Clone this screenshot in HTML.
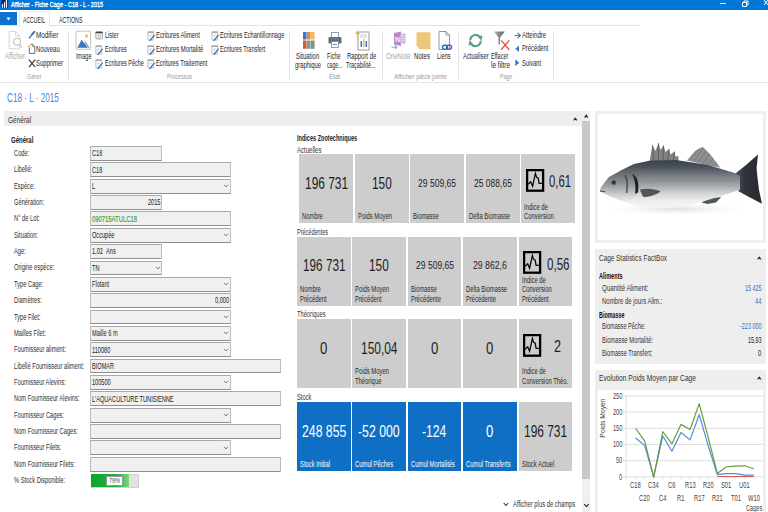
<!DOCTYPE html>
<html><head><meta charset="utf-8"><style>
html,body{margin:0;padding:0;width:768px;height:512px;overflow:hidden;background:#fff}
body{position:relative;font-family:"Liberation Sans",sans-serif}
.r{position:absolute;display:block}
.t{position:absolute;white-space:nowrap;line-height:1;transform-origin:0 0}
</style></head><body>
<div class="r" style="left:0.00px;top:0.00px;width:768.00px;height:10.00px;background:#0077d6"></div>
<svg class="r" style="left:0px;top:0px" width="9" height="9" viewBox="0 0 9 9"><rect x="1.2" y="0" width="6.5" height="8" fill="#0c2a66"/><rect x="1.9" y="4.2" width="1.1" height="3.6" fill="#f4f4f4"/><rect x="3.9" y="2.3" width="1.1" height="5.5" fill="#f4f4f4"/><rect x="5.8" y="0" width="1.2" height="7.8" fill="#f4f4f4"/></svg>
<div class="t" style="left:10.90px;top:0.72px;font-size:7.3px;color:#fff;transform:scaleX(0.7600);-webkit-text-stroke:0.3px #fff">Afficher - Fiche Cage - C18 - L - 2015</div>
<div class="r" style="left:720.00px;top:2.50px;width:5.50px;height:1.00px;background:#fff;opacity:.85"></div>
<svg class="r" style="left:741px;top:0px" width="8" height="7" viewBox="0 0 8 7"><path d="M1.5 2.5h4v4h-4z M3 2.5v-1.5h4v4h-1.5" fill="none" stroke="#fff" stroke-width="1"/></svg>
<svg class="r" style="left:763px;top:0px" width="5" height="7" viewBox="0 0 5 7"><path d="M1 0L5 5M5 0L1 5" stroke="#fff" stroke-width="1"/></svg>
<div class="r" style="left:0.00px;top:10.30px;width:768.00px;height:15.70px;background:#fff"></div>
<div class="r" style="left:0.00px;top:25.00px;width:640.00px;height:1.20px;background:#e3e3e3"></div>
<div class="r" style="left:0.00px;top:11.50px;width:16.70px;height:13.90px;background:#0f72cc"></div>
<svg class="r" style="left:6px;top:17px" width="5" height="4" viewBox="0 0 5 4"><path d="M.5 .4h4L2.5 3.6z" fill="#fff"/></svg>
<div class="r" style="left:18.50px;top:11.30px;width:31.50px;height:14.90px;background:#fff;border:1px solid #e6e6e6;border-bottom:none;box-sizing:border-box"></div>
<div class="t" style="left:23.40px;top:16.00px;font-size:8.5px;color:#222;transform:scaleX(0.6025);">ACCUEIL</div>
<div class="t" style="left:58.60px;top:16.00px;font-size:8.5px;color:#222;transform:scaleX(0.6193);">ACTIONS</div>
<div class="r" style="left:0.00px;top:26.20px;width:768.00px;height:55.10px;background:#fff"></div>
<div class="r" style="left:0.00px;top:81.70px;width:768.00px;height:1.30px;background:#e4e4e4"></div>
<div class="r" style="left:68.40px;top:31.00px;width:0.80px;height:47.50px;background:#e2e2e2"></div>
<div class="r" style="left:289.10px;top:31.00px;width:0.80px;height:47.50px;background:#e2e2e2"></div>
<div class="r" style="left:381.80px;top:31.00px;width:0.80px;height:47.50px;background:#e2e2e2"></div>
<div class="r" style="left:457.50px;top:31.00px;width:0.80px;height:47.50px;background:#e2e2e2"></div>
<div class="r" style="left:552.70px;top:31.00px;width:0.80px;height:47.50px;background:#e2e2e2"></div>
<div class="t" style="left:27.00px;top:72.63px;font-size:8px;color:#9a9a9a;transform:scaleX(0.7139);">Gérer</div>
<div class="t" style="left:167.00px;top:72.63px;font-size:8px;color:#9a9a9a;transform:scaleX(0.6640);">Processus</div>
<div class="t" style="left:329.40px;top:72.63px;font-size:8px;color:#9a9a9a;transform:scaleX(0.8011);">État</div>
<div class="t" style="left:394.00px;top:72.63px;font-size:8px;color:#9a9a9a;transform:scaleX(0.7578);">Afficher pièce jointe</div>
<div class="t" style="left:500.00px;top:72.63px;font-size:8px;color:#9a9a9a;transform:scaleX(0.6422);">Page</div>
<svg class="r" style="left:8px;top:30px" width="16" height="20" viewBox="0 0 16 20"><path d="M1.2 1.4h6.3l4.2 4.4v13h-10.5z M7.5 1.4v4.4h4.2" fill="#fff" stroke="#d6d6d6" stroke-width="1" stroke-linejoin="round"/><circle cx="9.1" cy="11.7" r="3.4" fill="#fff" stroke="#c4c4c4" stroke-width="1.1"/><path d="M11.4 14.3l2.6 3.3" stroke="#c4c4c4" stroke-width="1.3"/></svg>
<div class="t" style="left:4.95px;top:52.40px;font-size:8.5px;color:#a8a8a8;transform:scaleX(0.7012);">Afficher</div>
<svg class="r" style="left:28px;top:31px" width="8" height="9" viewBox="0 0 8 9"><path d="M1.4 6.9L5.4 1.9" stroke="#3672c4" stroke-width="1.5" stroke-linecap="round"/><path d="M4.3 3.2L6.3 .9" stroke="#3672c4" stroke-width="2" stroke-linecap="round"/></svg>
<div class="t" style="left:36.30px;top:30.80px;font-size:8.5px;color:#262626;transform:scaleX(0.7376);">Modifier</div>
<svg class="r" style="left:27px;top:43px" width="9" height="11" viewBox="0 0 9 11"><path d="M2.3 4.5v5.9h5.5V3.6l-2-2.2H3.5" fill="#fff" stroke="#555" stroke-width=".85" stroke-linejoin="round"/><path d="M5.6 1.4v2.3h2.2" fill="none" stroke="#777" stroke-width=".7"/><path d="M2.2 1.7l1.2 1.5l-1.2 1.5l-1.2-1.5z" fill="#f0b050"/></svg>
<div class="t" style="left:36.30px;top:44.60px;font-size:8.5px;color:#262626;transform:scaleX(0.6965);">Nouveau</div>
<svg class="r" style="left:27.5px;top:58.5px" width="8" height="9" viewBox="0 0 8 9"><path d="M.9 .7L7.2 8.2M7.2 .7L.9 8.2" stroke="#3a3a3a" stroke-width="1.15"/></svg>
<div class="t" style="left:36.30px;top:58.80px;font-size:8.5px;color:#262626;transform:scaleX(0.6937);">Supprimer</div>
<svg class="r" style="left:75px;top:30px" width="17" height="20" viewBox="0 0 17 20"><rect x="1.1" y="1.3" width="14.5" height="18" rx=".8" fill="#fff" stroke="#c6c6c6" stroke-width="1.1"/><path d="M2.3 17.8L6.6 9.8L9.4 13.6L10 10.9L14.5 17.8z" fill="#3d77c0"/><path d="M9.4 12.2L13.2 17.8" stroke="#fff" stroke-width=".8"/><ellipse cx="11.5" cy="5.9" rx="1.5" ry="1.9" fill="#efbf62"/></svg>
<div class="t" style="left:75.80px;top:52.40px;font-size:8.5px;color:#262626;transform:scaleX(0.6603);">Image</div>
<svg class="r" style="left:95px;top:31px" width="8.5" height="9" viewBox="0 0 8.5 9"><rect x=".8" y=".9" width="6.6" height="7" rx="1" fill="#f4f4f4" stroke="#9a9a9a" stroke-width=".9"/><rect x=".6" y=".7" width="7" height="1.5" fill="#3e3e3e"/><path d="M3.1 2.2v5.6M5.1 2.2v5.6" stroke="#b0b0b0" stroke-width=".8"/></svg>
<div class="t" style="left:104.60px;top:30.80px;font-size:8.5px;color:#262626;transform:scaleX(0.6495);">Lister</div>
<svg class="r" style="left:95.3px;top:44.5px" width="9" height="10" viewBox="0 0 9 10"><path d="M.8 .7h5.8v8.3h-5.8z" fill="#fafafa" stroke="#b8b8b8" stroke-width=".8"/><path d="M.8 .7h5.8v1.1h-5.8z" fill="#9a9a9a"/><path d="M2 4.2l1 1l1.5-1.8" stroke="#aaa" stroke-width=".6" fill="none"/><path d="M3 9.5L7.3 4.2" stroke="#3672c4" stroke-width="1.25" stroke-linecap="round"/></svg>
<div class="t" style="left:104.60px;top:44.60px;font-size:8.5px;color:#262626;transform:scaleX(0.6500);">Ecritures</div>
<svg class="r" style="left:95.3px;top:59.0px" width="9" height="10" viewBox="0 0 9 10"><path d="M.8 .7h5.8v8.3h-5.8z" fill="#fafafa" stroke="#b8b8b8" stroke-width=".8"/><path d="M.8 .7h5.8v1.1h-5.8z" fill="#9a9a9a"/><path d="M2 4.2l1 1l1.5-1.8" stroke="#aaa" stroke-width=".6" fill="none"/><path d="M3 9.5L7.3 4.2" stroke="#3672c4" stroke-width="1.25" stroke-linecap="round"/></svg>
<div class="t" style="left:104.60px;top:59.30px;font-size:8.5px;color:#262626;transform:scaleX(0.6483);">Ecritures Pêche</div>
<svg class="r" style="left:147.3px;top:31.0px" width="9" height="10" viewBox="0 0 9 10"><path d="M.8 .7h5.8v8.3h-5.8z" fill="#fafafa" stroke="#b8b8b8" stroke-width=".8"/><path d="M.8 .7h5.8v1.1h-5.8z" fill="#9a9a9a"/><path d="M2 4.2l1 1l1.5-1.8" stroke="#aaa" stroke-width=".6" fill="none"/><path d="M3 9.5L7.3 4.2" stroke="#3672c4" stroke-width="1.25" stroke-linecap="round"/></svg>
<div class="t" style="left:155.60px;top:30.80px;font-size:8.5px;color:#262626;transform:scaleX(0.6899);">Ecritures Aliment</div>
<svg class="r" style="left:147.3px;top:44.5px" width="9" height="10" viewBox="0 0 9 10"><path d="M.8 .7h5.8v8.3h-5.8z" fill="#fafafa" stroke="#b8b8b8" stroke-width=".8"/><path d="M.8 .7h5.8v1.1h-5.8z" fill="#9a9a9a"/><path d="M2 4.2l1 1l1.5-1.8" stroke="#aaa" stroke-width=".6" fill="none"/><path d="M3 9.5L7.3 4.2" stroke="#3672c4" stroke-width="1.25" stroke-linecap="round"/></svg>
<div class="t" style="left:155.60px;top:44.60px;font-size:8.5px;color:#262626;transform:scaleX(0.6906);">Ecritures Mortalité</div>
<svg class="r" style="left:147.3px;top:59.0px" width="9" height="10" viewBox="0 0 9 10"><path d="M.8 .7h5.8v8.3h-5.8z" fill="#fafafa" stroke="#b8b8b8" stroke-width=".8"/><path d="M.8 .7h5.8v1.1h-5.8z" fill="#9a9a9a"/><path d="M2 4.2l1 1l1.5-1.8" stroke="#aaa" stroke-width=".6" fill="none"/><path d="M3 9.5L7.3 4.2" stroke="#3672c4" stroke-width="1.25" stroke-linecap="round"/></svg>
<div class="t" style="left:155.60px;top:59.30px;font-size:8.5px;color:#262626;transform:scaleX(0.6758);">Ecritures Traitement</div>
<svg class="r" style="left:211.0px;top:31.0px" width="9" height="10" viewBox="0 0 9 10"><path d="M.8 .7h5.8v8.3h-5.8z" fill="#fafafa" stroke="#b8b8b8" stroke-width=".8"/><path d="M.8 .7h5.8v1.1h-5.8z" fill="#9a9a9a"/><path d="M2 4.2l1 1l1.5-1.8" stroke="#aaa" stroke-width=".6" fill="none"/><path d="M3 9.5L7.3 4.2" stroke="#3672c4" stroke-width="1.25" stroke-linecap="round"/></svg>
<div class="t" style="left:219.70px;top:30.80px;font-size:8.5px;color:#262626;transform:scaleX(0.6671);">Ecritures Echantillonnage</div>
<svg class="r" style="left:211.0px;top:44.5px" width="9" height="10" viewBox="0 0 9 10"><path d="M.8 .7h5.8v8.3h-5.8z" fill="#fafafa" stroke="#b8b8b8" stroke-width=".8"/><path d="M.8 .7h5.8v1.1h-5.8z" fill="#9a9a9a"/><path d="M2 4.2l1 1l1.5-1.8" stroke="#aaa" stroke-width=".6" fill="none"/><path d="M3 9.5L7.3 4.2" stroke="#3672c4" stroke-width="1.25" stroke-linecap="round"/></svg>
<div class="t" style="left:219.70px;top:44.60px;font-size:8.5px;color:#262626;transform:scaleX(0.6524);">Ecritures Transfert</div>
<svg class="r" style="left:302.5px;top:31.5px" width="12" height="17" viewBox="0 0 12 17"><rect x="0" y="0" width="3.6" height="7.5" fill="#3d78c4"/><rect x="4" y="0" width="3.6" height="7.5" fill="#e8883c"/><rect x="8" y="0" width="3.6" height="7.5" fill="#f0b860"/><rect x="0" y="8.5" width="3.6" height="8.3" fill="#d65a3a"/><rect x="4" y="8.5" width="3.6" height="8.3" fill="#6aa88c"/><rect x="8" y="8.5" width="3.6" height="8.3" fill="#8c8c8c"/></svg>
<div class="t" style="left:296.00px;top:52.40px;font-size:8.5px;color:#262626;transform:scaleX(0.7013);">Situation</div>
<div class="t" style="left:294.60px;top:61.10px;font-size:8.5px;color:#262626;transform:scaleX(0.6876);">graphique</div>
<svg class="r" style="left:327.5px;top:32px" width="14" height="16" viewBox="0 0 14 16"><rect x="3.5" y=".5" width="7" height="5" fill="#fff" stroke="#888" stroke-width=".8"/><rect x=".5" y="5" width="13" height="6.5" rx="1" fill="#6b6b6b"/><rect x="3" y="6.3" width="8" height="1" fill="#4a8ad0"/><rect x="3.5" y="9.5" width="7" height="6" fill="#fff" stroke="#888" stroke-width=".8"/><rect x="5" y="12" width="4" height="1" fill="#4a8ad0"/></svg>
<div class="t" style="left:326.75px;top:52.40px;font-size:8.5px;color:#262626;transform:scaleX(0.6591);">Fiche</div>
<div class="t" style="left:326.65px;top:61.10px;font-size:8.5px;color:#262626;transform:scaleX(0.5996);">cage...</div>
<svg class="r" style="left:353.5px;top:29.5px" width="16" height="21" viewBox="0 0 16 21"><rect x="4" y="2" width="11" height="18" fill="#fff" stroke="#9a9a9a" stroke-width="1"/><path d="M6 5h7M6 7h7" stroke="#bbb" stroke-width=".8"/><rect x="6.5" y="11" width="1.6" height="6" fill="#3d78c4"/><rect x="9" y="9" width="1.6" height="8" fill="#f0c060"/><rect x="11.5" y="11" width="1.6" height="6" fill="#3d78c4"/><path d="M4 0L1 4h2.5L2 7.5L6 3H3.5z" fill="#f0a83a"/></svg>
<div class="t" style="left:346.50px;top:52.40px;font-size:8.5px;color:#262626;transform:scaleX(0.6943);">Rapport de</div>
<div class="t" style="left:346.45px;top:61.10px;font-size:8.5px;color:#262626;transform:scaleX(0.6416);">Traçabilité...</div>
<svg class="r" style="left:390.5px;top:30.5px" width="16" height="18" viewBox="0 0 16 18"><path d="M3 2L10 .5V15L3 13.5z" fill="#b88ac8"/><rect x="9" y="2.5" width="5.5" height="10" fill="#d2b2de"/><path d="M10.5 5h3M10.5 7.5h3M10.5 10h3" stroke="#f4eaf7" stroke-width=".8"/><text x="4" y="10.5" font-size="7" font-family="Liberation Sans" font-weight="bold" fill="#f6effa">N</text><path d="M.5 16.2h5M4 14.5l2 1.7l-2 1.7" stroke="#7fb0e0" stroke-width="1.1" fill="none"/></svg>
<div class="t" style="left:386.40px;top:52.40px;font-size:8.5px;color:#a8a8a8;transform:scaleX(0.7172);">OneNote</div>
<svg class="r" style="left:415.5px;top:31.5px" width="15" height="18" viewBox="0 0 15 18"><path d="M.5 .2h14v17h-11l-3-3.5z" fill="#efc77a"/><path d="M.5 13.7h3v3.5" fill="#f8e2b0" stroke="#e0b060" stroke-width=".5"/></svg>
<div class="t" style="left:414.40px;top:52.40px;font-size:8.5px;color:#262626;transform:scaleX(0.7206);">Notes</div>
<svg class="r" style="left:438px;top:31px" width="15" height="19" viewBox="0 0 15 19"><path d="M1 .5h7l3.5 3.5v14.5h-10.5z M8 .5v3.5h3.5" fill="#fff" stroke="#8a8a8a" stroke-width=".9"/><rect x="4.5" y="14.3" width="5" height="3.8" rx="1.9" fill="none" stroke="#2f6bc0" stroke-width="1.4"/><rect x="8.5" y="14.3" width="5" height="3.8" rx="1.9" fill="none" stroke="#2f6bc0" stroke-width="1.4"/></svg>
<div class="t" style="left:437.25px;top:52.40px;font-size:8.5px;color:#262626;transform:scaleX(0.6742);">Liens</div>
<svg class="r" style="left:468px;top:30.5px" width="15" height="18" viewBox="0 0 15 18"><path d="M2.3 9.2A5.3 5.3 0 0 1 11.9 6.1" fill="none" stroke="#58a085" stroke-width="2.1"/><path d="M9.6 5.2L14.6 4.6L13.4 10z" fill="#58a085"/><path d="M12.7 9.8A5.3 5.3 0 0 1 3.1 12.9" fill="none" stroke="#58a085" stroke-width="2.1"/><path d="M5.4 13.8L.4 14.4L1.6 9z" fill="#58a085"/></svg>
<div class="t" style="left:463.00px;top:52.40px;font-size:8.5px;color:#262626;transform:scaleX(0.6859);">Actualiser</div>
<svg class="r" style="left:492.5px;top:30.5px" width="17" height="20" viewBox="0 0 17 20"><defs><linearGradient id="fg" x1="0" x2="1"><stop offset="0" stop-color="#c8c8c8"/><stop offset=".45" stop-color="#8a8a8a"/><stop offset="1" stop-color="#6a6a6a"/></linearGradient></defs><path d="M.8 .5h11L7.1 6.6v6.9H5.5V6.6z" fill="url(#fg)"/><path d="M8.2 9.4L16.2 18.8M16.2 9.4L8.2 18.8" stroke="#e0553a" stroke-width="1.35"/></svg>
<div class="t" style="left:491.25px;top:52.40px;font-size:8.5px;color:#262626;transform:scaleX(0.6461);">Effacer</div>
<div class="t" style="left:490.55px;top:61.10px;font-size:8.5px;color:#262626;transform:scaleX(0.7629);">le filtre</div>
<svg class="r" style="left:513.5px;top:32px" width="7.5" height="7" viewBox="0 0 7.5 7"><path d="M.5 3.5h5.8M3.6 .8L6.3 3.5L3.6 6.2" stroke="#3a78c0" stroke-width="1.2" fill="none"/></svg>
<div class="t" style="left:521.90px;top:30.80px;font-size:8.5px;color:#262626;transform:scaleX(0.7084);">Atteindre</div>
<svg class="r" style="left:514.8px;top:45.4px" width="4.5" height="7.5" viewBox="0 0 4.5 7.5"><path d="M4.2 .2V7.2L.3 3.7z" fill="#3a78c0"/></svg>
<div class="t" style="left:521.90px;top:44.40px;font-size:8.5px;color:#262626;transform:scaleX(0.6813);">Précédent</div>
<svg class="r" style="left:515px;top:59px" width="4.5" height="7.5" viewBox="0 0 4.5 7.5"><path d="M.3 .2V7.2L4.2 3.7z" fill="#3a78c0"/></svg>
<div class="t" style="left:521.90px;top:58.80px;font-size:8.5px;color:#262626;transform:scaleX(0.6737);">Suivant</div>
<div class="t" style="left:7.00px;top:91.54px;font-size:12px;color:#3f8ad6;transform:scaleX(0.6792);">C18 · L · 2015</div>
<div class="r" style="left:4.00px;top:111.00px;width:577.80px;height:15.10px;background:#ededed"></div>
<div class="t" style="left:7.70px;top:115.58px;font-size:9px;color:#333;transform:scaleX(0.7214);">Général</div>
<svg class="r" style="left:572.5px;top:116.5px" width="5" height="4" viewBox="0 0 5 4"><path d="M.7 3.3L2.3 1.2L3.9 3.3" fill="none" stroke="#333" stroke-width="1.3"/></svg>
<div class="r" style="left:582.30px;top:111.00px;width:7.70px;height:401.00px;background:#f0f0f0"></div>
<div class="r" style="left:582.30px;top:121.30px;width:7.70px;height:357.40px;background:#c8c8c8"></div>
<svg class="r" style="left:583.7px;top:114.3px" width="5" height="4.5" viewBox="0 0 5 4.5"><path d="M.7 3.6L2.2 1.3L3.7 3.6" fill="none" stroke="#333" stroke-width="1.3"/></svg>
<svg class="r" style="left:583px;top:503px" width="7" height="5" viewBox="0 0 7 5"><path d="M1.2 1.2L3.5 3.6L5.8 1.2" stroke="#333" stroke-width="1.2" fill="none"/></svg>
<div class="t" style="left:11.00px;top:136.10px;font-size:8.5px;color:#222;font-weight:bold;transform:scaleX(0.7045);">Général</div>
<div class="t" style="left:13.50px;top:148.90px;font-size:8.5px;color:#2e2e2e;transform:scaleX(0.6750);">Code:</div>
<div class="r" style="left:90.20px;top:146.00px;width:71.80px;height:14.80px;background:#f0f0f0;border:1px solid #bdbdbd;border-bottom:1.5px solid #8f8f8f;border-top-color:#a9a9a9;box-sizing:border-box"></div>
<div class="t" style="left:91.90px;top:149.20px;font-size:8.5px;color:#222;transform:scaleX(0.6600);">C18</div>
<div class="t" style="left:13.50px;top:165.26px;font-size:8.5px;color:#2e2e2e;transform:scaleX(0.6750);">Libellé:</div>
<div class="r" style="left:90.20px;top:162.36px;width:140.40px;height:14.80px;background:#f0f0f0;border:1px solid #bdbdbd;border-bottom:1.5px solid #8f8f8f;border-top-color:#a9a9a9;box-sizing:border-box"></div>
<div class="t" style="left:91.90px;top:165.56px;font-size:8.5px;color:#222;transform:scaleX(0.6600);">C18</div>
<div class="t" style="left:13.50px;top:181.62px;font-size:8.5px;color:#2e2e2e;transform:scaleX(0.6750);">Espèce:</div>
<div class="r" style="left:90.20px;top:178.72px;width:140.40px;height:14.80px;background:#f0f0f0;border:1px solid #bdbdbd;border-bottom:1.5px solid #8f8f8f;border-top-color:#a9a9a9;box-sizing:border-box"></div>
<svg class="r" style="left:223.4px;top:184.11999999999998px" width="6" height="4" viewBox="0 0 6 4"><path d="M1 .8L3 2.9L5 .8" stroke="#666" stroke-width=".9" fill="none"/></svg>
<div class="t" style="left:91.90px;top:181.92px;font-size:8.5px;color:#222;transform:scaleX(0.6600);">L</div>
<div class="t" style="left:13.50px;top:197.98px;font-size:8.5px;color:#2e2e2e;transform:scaleX(0.6750);">Génération:</div>
<div class="r" style="left:90.20px;top:195.08px;width:71.80px;height:14.80px;background:#f0f0f0;border:1px solid #bdbdbd;border-bottom:1.5px solid #8f8f8f;border-top-color:#a9a9a9;box-sizing:border-box"></div>
<div class="t" style="left:148.32px;top:198.28px;font-size:8.5px;color:#222;transform:scaleX(0.6600);">2015</div>
<div class="t" style="left:13.50px;top:214.34px;font-size:8.5px;color:#2e2e2e;transform:scaleX(0.6750);">N° de Lot:</div>
<div class="r" style="left:90.20px;top:211.44px;width:140.40px;height:14.80px;background:#f0f0f0;border:1px solid #bdbdbd;border-bottom:1.5px solid #8f8f8f;border-top-color:#a9a9a9;box-sizing:border-box"></div>
<div class="t" style="left:92.10px;top:214.64px;font-size:8.5px;color:#4f9d3a;transform:scaleX(0.6917);-webkit-text-stroke:0.2px #4f9d3a">090715ATULC18</div>
<div class="t" style="left:13.50px;top:230.70px;font-size:8.5px;color:#2e2e2e;transform:scaleX(0.6750);">Situation:</div>
<div class="r" style="left:90.20px;top:227.80px;width:140.40px;height:14.80px;background:#f0f0f0;border:1px solid #bdbdbd;border-bottom:1.5px solid #8f8f8f;border-top-color:#a9a9a9;box-sizing:border-box"></div>
<svg class="r" style="left:223.4px;top:233.2px" width="6" height="4" viewBox="0 0 6 4"><path d="M1 .8L3 2.9L5 .8" stroke="#666" stroke-width=".9" fill="none"/></svg>
<div class="t" style="left:91.90px;top:231.00px;font-size:8.5px;color:#222;transform:scaleX(0.6600);">Occupée</div>
<div class="t" style="left:13.50px;top:247.06px;font-size:8.5px;color:#2e2e2e;transform:scaleX(0.6750);">Age:</div>
<div class="r" style="left:90.20px;top:244.16px;width:71.80px;height:14.80px;background:#f0f0f0;border:1px solid #bdbdbd;border-bottom:1.5px solid #8f8f8f;border-top-color:#a9a9a9;box-sizing:border-box"></div>
<div class="t" style="left:91.90px;top:247.36px;font-size:8.5px;color:#222;transform:scaleX(0.6600);">1,02  Ans</div>
<div class="t" style="left:13.50px;top:263.42px;font-size:8.5px;color:#2e2e2e;transform:scaleX(0.6750);">Origine espèce:</div>
<div class="r" style="left:90.20px;top:260.52px;width:71.80px;height:14.80px;background:#f0f0f0;border:1px solid #bdbdbd;border-bottom:1.5px solid #8f8f8f;border-top-color:#a9a9a9;box-sizing:border-box"></div>
<svg class="r" style="left:154.8px;top:265.91999999999996px" width="6" height="4" viewBox="0 0 6 4"><path d="M1 .8L3 2.9L5 .8" stroke="#666" stroke-width=".9" fill="none"/></svg>
<div class="t" style="left:91.90px;top:263.72px;font-size:8.5px;color:#222;transform:scaleX(0.6600);">TN</div>
<div class="t" style="left:13.50px;top:279.78px;font-size:8.5px;color:#2e2e2e;transform:scaleX(0.6750);">Type Cage:</div>
<div class="r" style="left:90.20px;top:276.88px;width:140.40px;height:14.80px;background:#f0f0f0;border:1px solid #bdbdbd;border-bottom:1.5px solid #8f8f8f;border-top-color:#a9a9a9;box-sizing:border-box"></div>
<svg class="r" style="left:223.4px;top:282.28px" width="6" height="4" viewBox="0 0 6 4"><path d="M1 .8L3 2.9L5 .8" stroke="#666" stroke-width=".9" fill="none"/></svg>
<div class="t" style="left:91.90px;top:280.08px;font-size:8.5px;color:#222;transform:scaleX(0.6600);">Flotant</div>
<div class="t" style="left:13.50px;top:296.14px;font-size:8.5px;color:#2e2e2e;transform:scaleX(0.6750);">Diamètres:</div>
<div class="r" style="left:90.20px;top:293.24px;width:140.40px;height:14.80px;background:#f0f0f0;border:1px solid #bdbdbd;border-bottom:1.5px solid #8f8f8f;border-top-color:#a9a9a9;box-sizing:border-box"></div>
<div class="t" style="left:215.36px;top:296.44px;font-size:8.5px;color:#222;transform:scaleX(0.6600);">0,000</div>
<div class="t" style="left:13.50px;top:312.50px;font-size:8.5px;color:#2e2e2e;transform:scaleX(0.6750);">Type Filet:</div>
<div class="r" style="left:90.20px;top:309.60px;width:140.40px;height:14.80px;background:#f0f0f0;border:1px solid #bdbdbd;border-bottom:1.5px solid #8f8f8f;border-top-color:#a9a9a9;box-sizing:border-box"></div>
<svg class="r" style="left:223.4px;top:314.99999999999994px" width="6" height="4" viewBox="0 0 6 4"><path d="M1 .8L3 2.9L5 .8" stroke="#666" stroke-width=".9" fill="none"/></svg>
<div class="t" style="left:13.50px;top:328.86px;font-size:8.5px;color:#2e2e2e;transform:scaleX(0.6750);">Mailles Filet:</div>
<div class="r" style="left:90.20px;top:325.96px;width:140.40px;height:14.80px;background:#f0f0f0;border:1px solid #bdbdbd;border-bottom:1.5px solid #8f8f8f;border-top-color:#a9a9a9;box-sizing:border-box"></div>
<svg class="r" style="left:223.4px;top:331.35999999999996px" width="6" height="4" viewBox="0 0 6 4"><path d="M1 .8L3 2.9L5 .8" stroke="#666" stroke-width=".9" fill="none"/></svg>
<div class="t" style="left:91.90px;top:329.16px;font-size:8.5px;color:#222;transform:scaleX(0.6600);">Maille 6 m</div>
<div class="t" style="left:13.50px;top:345.22px;font-size:8.5px;color:#2e2e2e;transform:scaleX(0.6750);">Fournisseur aliment:</div>
<div class="r" style="left:90.20px;top:342.32px;width:140.40px;height:14.80px;background:#f0f0f0;border:1px solid #bdbdbd;border-bottom:1.5px solid #8f8f8f;border-top-color:#a9a9a9;box-sizing:border-box"></div>
<svg class="r" style="left:223.4px;top:347.71999999999997px" width="6" height="4" viewBox="0 0 6 4"><path d="M1 .8L3 2.9L5 .8" stroke="#666" stroke-width=".9" fill="none"/></svg>
<div class="t" style="left:91.90px;top:345.52px;font-size:8.5px;color:#222;transform:scaleX(0.6600);">110080</div>
<div class="t" style="left:13.50px;top:361.58px;font-size:8.5px;color:#2e2e2e;transform:scaleX(0.6750);">Libellé Fournisseur aliment:</div>
<div class="r" style="left:90.20px;top:358.68px;width:190.80px;height:14.80px;background:#f0f0f0;border:1px solid #bdbdbd;border-bottom:1.5px solid #8f8f8f;border-top-color:#a9a9a9;box-sizing:border-box"></div>
<div class="t" style="left:91.90px;top:361.88px;font-size:8.5px;color:#222;transform:scaleX(0.6600);">BIOMAR</div>
<div class="t" style="left:13.50px;top:377.94px;font-size:8.5px;color:#2e2e2e;transform:scaleX(0.6750);">Fournisseur Alevins:</div>
<div class="r" style="left:90.20px;top:375.04px;width:140.40px;height:14.80px;background:#f0f0f0;border:1px solid #bdbdbd;border-bottom:1.5px solid #8f8f8f;border-top-color:#a9a9a9;box-sizing:border-box"></div>
<svg class="r" style="left:223.4px;top:380.44px" width="6" height="4" viewBox="0 0 6 4"><path d="M1 .8L3 2.9L5 .8" stroke="#666" stroke-width=".9" fill="none"/></svg>
<div class="t" style="left:91.90px;top:378.24px;font-size:8.5px;color:#222;transform:scaleX(0.6600);">100500</div>
<div class="t" style="left:13.50px;top:394.30px;font-size:8.5px;color:#2e2e2e;transform:scaleX(0.6750);">Nom Fournisseur Alevins:</div>
<div class="r" style="left:90.20px;top:391.40px;width:190.80px;height:14.80px;background:#f0f0f0;border:1px solid #bdbdbd;border-bottom:1.5px solid #8f8f8f;border-top-color:#a9a9a9;box-sizing:border-box"></div>
<div class="t" style="left:91.90px;top:394.60px;font-size:8.5px;color:#222;transform:scaleX(0.6600);">L'AQUACULTURE TUNISIENNE</div>
<div class="t" style="left:13.50px;top:410.66px;font-size:8.5px;color:#2e2e2e;transform:scaleX(0.6750);">Fournisseur Cages:</div>
<div class="r" style="left:90.20px;top:407.76px;width:140.40px;height:14.80px;background:#f0f0f0;border:1px solid #bdbdbd;border-bottom:1.5px solid #8f8f8f;border-top-color:#a9a9a9;box-sizing:border-box"></div>
<svg class="r" style="left:223.4px;top:413.15999999999997px" width="6" height="4" viewBox="0 0 6 4"><path d="M1 .8L3 2.9L5 .8" stroke="#666" stroke-width=".9" fill="none"/></svg>
<div class="t" style="left:13.50px;top:427.02px;font-size:8.5px;color:#2e2e2e;transform:scaleX(0.6750);">Nom Fournisseur Cages:</div>
<div class="r" style="left:90.20px;top:424.12px;width:190.80px;height:14.80px;background:#f0f0f0;border:1px solid #bdbdbd;border-bottom:1.5px solid #8f8f8f;border-top-color:#a9a9a9;box-sizing:border-box"></div>
<div class="t" style="left:13.50px;top:443.38px;font-size:8.5px;color:#2e2e2e;transform:scaleX(0.6750);">Fournisseur Filets:</div>
<div class="r" style="left:90.20px;top:440.48px;width:140.40px;height:14.80px;background:#f0f0f0;border:1px solid #bdbdbd;border-bottom:1.5px solid #8f8f8f;border-top-color:#a9a9a9;box-sizing:border-box"></div>
<svg class="r" style="left:223.4px;top:445.88px" width="6" height="4" viewBox="0 0 6 4"><path d="M1 .8L3 2.9L5 .8" stroke="#666" stroke-width=".9" fill="none"/></svg>
<div class="t" style="left:13.50px;top:459.74px;font-size:8.5px;color:#2e2e2e;transform:scaleX(0.6750);">Nom Fournisseur Filets:</div>
<div class="r" style="left:90.20px;top:456.84px;width:190.80px;height:14.80px;background:#f0f0f0;border:1px solid #bdbdbd;border-bottom:1.5px solid #8f8f8f;border-top-color:#a9a9a9;box-sizing:border-box"></div>
<div class="t" style="left:13.50px;top:476.10px;font-size:8.5px;color:#2e2e2e;transform:scaleX(0.6750);">% Stock Disponible:</div>
<div class="r" style="left:90.80px;top:473.80px;width:48.20px;height:13.80px;background:#e2e2e2;border:1px solid #d0d0d0;box-sizing:border-box"></div>
<div class="r" style="left:91.30px;top:474.30px;width:37.60px;height:12.80px;background:linear-gradient(90deg,#0aa52c 0%,#22b23f 70%,#7ad87e 100%)"></div>
<div class="r" style="left:106.40px;top:475.70px;width:16.60px;height:9.90px;background:#fff;border:.8px solid #9a9a9a;box-sizing:border-box"></div>
<div class="t" style="left:109.20px;top:477.03px;font-size:8px;color:#444;transform:scaleX(0.6870);">79%</div>
<div class="t" style="left:297.00px;top:134.10px;font-size:8.5px;color:#1e1e1e;font-weight:bold;transform:scaleX(0.6536);">Indices Zootechniques</div>
<div class="t" style="left:297.00px;top:145.80px;font-size:8.5px;color:#333;transform:scaleX(0.7103);">Actuelles</div>
<div class="t" style="left:297.00px;top:227.80px;font-size:8.5px;color:#333;transform:scaleX(0.6495);">Précédentes</div>
<div class="t" style="left:297.00px;top:310.00px;font-size:8.5px;color:#333;transform:scaleX(0.6702);">Théoriques</div>
<div class="t" style="left:297.20px;top:392.80px;font-size:8.5px;color:#333;transform:scaleX(0.6821);">Stock</div>
<div class="r" style="left:299.30px;top:154.20px;width:54.00px;height:69.10px;background:#cdcdcd"></div>
<div class="t" style="left:302.10px;top:212.10px;font-size:8.5px;color:#2a2a2a;transform:scaleX(0.6900);">Nombre</div>
<div class="t" style="left:304.75px;top:176.06px;font-size:16px;color:#1e1e1e;transform:scaleX(0.7452);">196 731</div>
<div class="r" style="left:354.80px;top:154.20px;width:54.00px;height:69.10px;background:#cdcdcd"></div>
<div class="t" style="left:357.60px;top:212.10px;font-size:8.5px;color:#2a2a2a;transform:scaleX(0.6900);">Poids Moyen</div>
<div class="t" style="left:371.95px;top:176.06px;font-size:16px;color:#1e1e1e;transform:scaleX(0.7379);">150</div>
<div class="r" style="left:410.30px;top:154.20px;width:54.00px;height:69.10px;background:#cdcdcd"></div>
<div class="t" style="left:413.10px;top:212.10px;font-size:8.5px;color:#2a2a2a;transform:scaleX(0.6900);">Biomasse</div>
<div class="t" style="left:418.25px;top:177.89px;font-size:11px;color:#1e1e1e;transform:scaleX(0.7786);">29 509,65</div>
<div class="r" style="left:465.80px;top:154.20px;width:54.00px;height:69.10px;background:#cdcdcd"></div>
<div class="t" style="left:468.60px;top:212.10px;font-size:8.5px;color:#2a2a2a;transform:scaleX(0.6900);">Delta Biomasse</div>
<div class="t" style="left:473.85px;top:177.89px;font-size:11px;color:#1e1e1e;transform:scaleX(0.7745);">25 088,65</div>
<div class="r" style="left:521.30px;top:154.20px;width:54.00px;height:69.10px;background:#cdcdcd"></div>
<div class="t" style="left:524.10px;top:202.75px;font-size:8.5px;color:#2a2a2a;transform:scaleX(0.6900);">Indice de</div>
<div class="t" style="left:524.10px;top:212.10px;font-size:8.5px;color:#2a2a2a;transform:scaleX(0.6900);">Conversion</div>
<svg class="r" style="left:525.9px;top:169.0px" width="19" height="23" viewBox="0 0 19 23"><rect x="1.1" y="1.1" width="16" height="20.6" fill="none" stroke="#000" stroke-width="2.3"/><path d="M2.2 15.3L4.7 12.8L6.6 17.2L9.4 4.4L10.6 8.4L12.2 9.1L13.1 14.4L15.9 14.4" stroke="#000" stroke-width="1.25" fill="none"/></svg>
<div class="t" style="left:548.90px;top:173.86px;font-size:16px;color:#1e1e1e;transform:scaleX(0.7065);">0,61</div>
<div class="r" style="left:296.90px;top:236.80px;width:53.70px;height:69.10px;background:#cdcdcd"></div>
<div class="t" style="left:299.70px;top:285.35px;font-size:8.5px;color:#2a2a2a;transform:scaleX(0.6900);">Nombre</div>
<div class="t" style="left:299.70px;top:294.70px;font-size:8.5px;color:#2a2a2a;transform:scaleX(0.6900);">Précédent</div>
<div class="t" style="left:302.50px;top:258.36px;font-size:16px;color:#1e1e1e;transform:scaleX(0.7348);">196 731</div>
<div class="r" style="left:352.35px;top:236.80px;width:53.70px;height:69.10px;background:#cdcdcd"></div>
<div class="t" style="left:355.15px;top:285.35px;font-size:8.5px;color:#2a2a2a;transform:scaleX(0.6900);">Poids Moyen</div>
<div class="t" style="left:355.15px;top:294.70px;font-size:8.5px;color:#2a2a2a;transform:scaleX(0.6900);">Précédent</div>
<div class="t" style="left:369.35px;top:258.36px;font-size:16px;color:#1e1e1e;transform:scaleX(0.7379);">150</div>
<div class="r" style="left:407.80px;top:236.80px;width:53.70px;height:69.10px;background:#cdcdcd"></div>
<div class="t" style="left:410.60px;top:285.35px;font-size:8.5px;color:#2a2a2a;transform:scaleX(0.6900);">Biomasse</div>
<div class="t" style="left:410.60px;top:294.70px;font-size:8.5px;color:#2a2a2a;transform:scaleX(0.6900);">Précédente</div>
<div class="t" style="left:415.60px;top:260.49px;font-size:11px;color:#1e1e1e;transform:scaleX(0.7786);">29 509,65</div>
<div class="r" style="left:463.25px;top:236.80px;width:53.70px;height:69.10px;background:#cdcdcd"></div>
<div class="t" style="left:466.05px;top:285.35px;font-size:8.5px;color:#2a2a2a;transform:scaleX(0.6900);">Delta Biomasse</div>
<div class="t" style="left:466.05px;top:294.70px;font-size:8.5px;color:#2a2a2a;transform:scaleX(0.6900);">Précédente</div>
<div class="t" style="left:473.20px;top:260.49px;font-size:11px;color:#1e1e1e;transform:scaleX(0.7894);">29 862,6</div>
<div class="r" style="left:518.70px;top:236.80px;width:53.70px;height:69.10px;background:#cdcdcd"></div>
<div class="t" style="left:521.50px;top:276.00px;font-size:8.5px;color:#2a2a2a;transform:scaleX(0.6900);">Indice de</div>
<div class="t" style="left:521.50px;top:285.35px;font-size:8.5px;color:#2a2a2a;transform:scaleX(0.6900);">Conversion</div>
<div class="t" style="left:521.50px;top:294.70px;font-size:8.5px;color:#2a2a2a;transform:scaleX(0.6900);">Précédent</div>
<svg class="r" style="left:523.3px;top:251.2px" width="19" height="23" viewBox="0 0 19 23"><rect x="1.1" y="1.1" width="16" height="20.6" fill="none" stroke="#000" stroke-width="2.3"/><path d="M2.2 15.3L4.7 12.8L6.6 17.2L9.4 4.4L10.6 8.4L12.2 9.1L13.1 14.4L15.9 14.4" stroke="#000" stroke-width="1.25" fill="none"/></svg>
<div class="t" style="left:546.50px;top:256.96px;font-size:16px;color:#1e1e1e;transform:scaleX(0.7225);">0,56</div>
<div class="r" style="left:296.90px;top:319.10px;width:53.70px;height:68.90px;background:#cdcdcd"></div>
<div class="t" style="left:320.10px;top:340.96px;font-size:16px;color:#1e1e1e;transform:scaleX(0.8203);">0</div>
<div class="r" style="left:352.35px;top:319.10px;width:53.70px;height:68.90px;background:#cdcdcd"></div>
<div class="t" style="left:355.15px;top:367.45px;font-size:8.5px;color:#2a2a2a;transform:scaleX(0.6900);">Poids Moyen</div>
<div class="t" style="left:355.15px;top:376.80px;font-size:8.5px;color:#2a2a2a;transform:scaleX(0.6900);">Théorique</div>
<div class="t" style="left:360.95px;top:340.96px;font-size:16px;color:#1e1e1e;transform:scaleX(0.7458);">150,04</div>
<div class="r" style="left:407.80px;top:319.10px;width:53.70px;height:68.90px;background:#cdcdcd"></div>
<div class="t" style="left:431.00px;top:340.96px;font-size:16px;color:#1e1e1e;transform:scaleX(0.8203);">0</div>
<div class="r" style="left:463.25px;top:319.10px;width:53.70px;height:68.90px;background:#cdcdcd"></div>
<div class="t" style="left:486.45px;top:340.96px;font-size:16px;color:#1e1e1e;transform:scaleX(0.8203);">0</div>
<div class="r" style="left:518.70px;top:319.10px;width:53.70px;height:68.90px;background:#cdcdcd"></div>
<div class="t" style="left:521.50px;top:367.45px;font-size:8.5px;color:#2a2a2a;transform:scaleX(0.6900);">Indice de</div>
<div class="t" style="left:521.50px;top:376.80px;font-size:8.5px;color:#2a2a2a;transform:scaleX(0.6900);">Conversion Théo.</div>
<svg class="r" style="left:522.9px;top:333.7px" width="19" height="23" viewBox="0 0 19 23"><rect x="1.1" y="1.1" width="16" height="20.6" fill="none" stroke="#000" stroke-width="2.3"/><path d="M2.2 15.3L4.7 12.8L6.6 17.2L9.4 4.4L10.6 8.4L12.2 9.1L13.1 14.4L15.9 14.4" stroke="#000" stroke-width="1.25" fill="none"/></svg>
<div class="t" style="left:554.00px;top:339.36px;font-size:16px;color:#1e1e1e;transform:scaleX(0.7866);">2</div>
<div class="r" style="left:296.90px;top:402.20px;width:53.70px;height:68.50px;background:#0f6fc5"></div>
<div class="t" style="left:299.70px;top:459.50px;font-size:8.5px;color:#fff;transform:scaleX(0.6900);">Stock Initial</div>
<div class="t" style="left:301.60px;top:423.76px;font-size:16px;color:#fff;transform:scaleX(0.7659);">248 855</div>
<div class="r" style="left:352.35px;top:402.20px;width:53.70px;height:68.50px;background:#0f6fc5"></div>
<div class="t" style="left:355.15px;top:459.50px;font-size:8.5px;color:#fff;transform:scaleX(0.6900);">Cumul Pêches</div>
<div class="t" style="left:358.40px;top:423.76px;font-size:16px;color:#fff;transform:scaleX(0.7666);">-52 000</div>
<div class="r" style="left:407.80px;top:402.20px;width:53.70px;height:68.50px;background:#0f6fc5"></div>
<div class="t" style="left:410.60px;top:459.50px;font-size:8.5px;color:#fff;transform:scaleX(0.6900);">Cumul Mortalités</div>
<div class="t" style="left:422.45px;top:423.76px;font-size:16px;color:#fff;transform:scaleX(0.7619);">-124</div>
<div class="r" style="left:463.25px;top:402.20px;width:53.70px;height:68.50px;background:#0f6fc5"></div>
<div class="t" style="left:466.05px;top:459.50px;font-size:8.5px;color:#fff;transform:scaleX(0.6900);">Cumul Transferts</div>
<div class="t" style="left:486.45px;top:423.76px;font-size:16px;color:#fff;transform:scaleX(0.8203);">0</div>
<div class="r" style="left:518.70px;top:402.20px;width:53.70px;height:68.50px;background:#cdcdcd"></div>
<div class="t" style="left:521.50px;top:459.50px;font-size:8.5px;color:#2a2a2a;transform:scaleX(0.6900);">Stock Actuel</div>
<div class="t" style="left:524.00px;top:423.76px;font-size:16px;color:#1e1e1e;transform:scaleX(0.7452);">196 731</div>
<svg class="r" style="left:502.5px;top:502px" width="6" height="5" viewBox="0 0 6 5"><path d="M.7 1L3 3.5L5.3 1" stroke="#333" stroke-width="1.1" fill="none"/></svg>
<div class="t" style="left:512.90px;top:500.00px;font-size:8.5px;color:#333;transform:scaleX(0.6879);">Afficher plus de champs</div>
<div class="r" style="left:595.00px;top:110.80px;width:170.80px;height:132.50px;background:#efefef"></div>
<div class="r" style="left:598.00px;top:113.70px;width:164.80px;height:126.60px;background:#fff"></div>
<svg class="r" style="left:598px;top:114px" width="164" height="126" viewBox="0 0 164 126"><defs>
<linearGradient id="fb" x1="0" y1="46" x2="0" y2="94" gradientUnits="userSpaceOnUse">
<stop offset="0" stop-color="#394047"/>
<stop offset="0.15" stop-color="#4b525a"/>
<stop offset="0.35" stop-color="#7b8288"/>
<stop offset="0.55" stop-color="#a6acaf"/>
<stop offset="0.7" stop-color="#d3d6d6"/>
<stop offset="0.85" stop-color="#eeeeee"/>
<stop offset="1" stop-color="#f4f4f4"/>
</linearGradient>
<linearGradient id="ft" x1="0" y1="0" x2="1" y2="0">
<stop offset="0" stop-color="#4a5057"/>
<stop offset="0.35" stop-color="#30353b"/>
<stop offset="1" stop-color="#262a2f"/>
</linearGradient>
<linearGradient id="hd" x1="0" y1="50" x2="0" y2="90" gradientUnits="userSpaceOnUse">
<stop offset="0" stop-color="#4a5056"/>
<stop offset="0.45" stop-color="#7d807a"/>
<stop offset="0.8" stop-color="#c9c7bf"/>
<stop offset="1" stop-color="#efefef"/>
</linearGradient>
<radialGradient id="sh" cx="0.5" cy="0.5" r="0.5">
<stop offset="0" stop-color="#d6d6d6" stop-opacity=".8"/>
<stop offset="1" stop-color="#fff" stop-opacity="0"/>
</radialGradient>
</defs>
<ellipse cx="78" cy="95" rx="80" ry="7" fill="url(#sh)"/>
<path d="M51.5 47.5L54.5 31L57.5 37L60.5 29L62.5 36L65.5 31.5L67.5 38L71 35L72.5 40.5L76.5 37.5L77.5 42.5L80.5 42L80.5 47z" fill="#7f8182"/>
<path d="M54.5 31L55.5 47M60.5 29L60.5 47M65.5 31.5L65 47M71 35L70 47M76.5 37.5L75.5 47" stroke="#4f5254" stroke-width=".7"/>
<path d="M88.9 46.5L97 37L104.6 32.7L112 40L122.5 53.8L109 51z" fill="#8d9092"/>
<path d="M92 46.5L102 34M96 47.5L105 34M100.5 48.5L108 37M105 49.5L111 40M110 50.5L115 44.5M115 51.5L118.5 48" stroke="#63676a" stroke-width=".55"/>
<path d="M103.5 88.5L110 84.5L123.3 83L118 88.5L109.5 90z" fill="#50565c"/>
<path d="M137.4 59.5L148 51L160 40.5L158.6 54L159.3 62L161 76L164 89.8L151 83L140.5 77.3z" fill="url(#ft)"/>
<path d="M1.8 76.6L3.2 73L10.7 63.3L23.4 56.3L36 50L51.3 46.8L78 46L109.3 50.7L137.4 59.3L142 61.5L142 75.5L137.4 77.3L123.3 82L101.4 88.5L82 92.8L61.5 94L42.4 92.5L23.4 86.8L10.7 81.7L3 77.9z" fill="url(#fb)"/>
<path d="M1.8 76.6L3.2 73L10.7 63.3L23.4 56.3L36 50L40 57L41 70L38 82L30 88L23.4 86.8L10.7 81.7L3 77.9z" fill="url(#hd)" opacity=".45"/>
<path d="M27.2 61.4C29.5 66 30 72 28.5 79" stroke="#3a3f44" stroke-width="1.6" fill="none" opacity=".8"/>
<path d="M34.3 59.8C39.5 63 41.5 70 40 78.5L37.2 80C38 73 37 66 34.3 59.8z" fill="#1d2125"/>
<circle cx="15.8" cy="68.4" r="2.5" fill="#2f3a46"/>
<circle cx="15.8" cy="68.4" r="2.5" fill="none" stroke="#8f98a0" stroke-width=".5"/>
<path d="M41.8 75.5C49 74.3 57 74.5 62.7 77.5C58 81 50 83.5 45 82.8z" fill="#51565b"/>
<path d="M2 77.2L7 77.6" stroke="#2a2a2a" stroke-width=".8"/>
<path d="M44 68C75 66 110 65.5 137 67" stroke="#5d6368" stroke-width=".5" fill="none" opacity=".4"/>
</svg>
<div class="r" style="left:595.00px;top:249.40px;width:170.90px;height:114.20px;background:#eeeeee"></div>
<div class="t" style="left:598.90px;top:252.86px;font-size:9.5px;color:#333;transform:scaleX(0.6743);">Cage Statistics FactBox</div>
<svg class="r" style="left:756.5px;top:255.8px" width="5" height="4" viewBox="0 0 5 4"><path d="M.7 3.3L2.3 1.2L3.9 3.3" fill="none" stroke="#333" stroke-width="1.3"/></svg>
<div class="t" style="left:599.40px;top:272.00px;font-size:8.5px;color:#111;font-weight:bold;transform:scaleX(0.6574);">Aliments</div>
<div class="t" style="left:601.90px;top:283.50px;font-size:8.5px;color:#333;transform:scaleX(0.7184);">Quantité Aliment:</div>
<div class="t" style="left:744.80px;top:283.50px;font-size:8.5px;color:#2b74c8;transform:scaleX(0.6346);">15 425</div>
<div class="t" style="left:601.90px;top:297.00px;font-size:8.5px;color:#333;transform:scaleX(0.7025);">Nombre de jours Alim.:</div>
<div class="t" style="left:754.87px;top:297.00px;font-size:8.5px;color:#2b74c8;transform:scaleX(0.6800);">44</div>
<div class="t" style="left:599.40px;top:310.80px;font-size:8.5px;color:#111;font-weight:bold;transform:scaleX(0.6325);">Biomasse</div>
<div class="t" style="left:601.90px;top:321.60px;font-size:8.5px;color:#333;transform:scaleX(0.6561);">Biomasse Pêche:</div>
<div class="t" style="left:739.70px;top:321.60px;font-size:8.5px;color:#2b74c8;transform:scaleX(0.6437);">-223 000</div>
<div class="t" style="left:601.90px;top:335.60px;font-size:8.5px;color:#333;transform:scaleX(0.6846);">Biomasse Mortalité:</div>
<div class="t" style="left:747.90px;top:335.60px;font-size:8.5px;color:#222;transform:scaleX(0.6300);">15,93</div>
<div class="t" style="left:601.90px;top:349.00px;font-size:8.5px;color:#333;transform:scaleX(0.6655);">Biomasse Transfert:</div>
<div class="t" style="left:758.09px;top:349.00px;font-size:8.5px;color:#222;transform:scaleX(0.6800);">0</div>
<div class="r" style="left:595.30px;top:369.50px;width:170.30px;height:142.50px;background:#eeeeee"></div>
<div class="r" style="left:598.30px;top:389.70px;width:164.30px;height:122.30px;background:#fff"></div>
<div class="t" style="left:598.90px;top:373.26px;font-size:9.5px;color:#333;transform:scaleX(0.7011);">Evolution Poids Moyen par Cage</div>
<svg class="r" style="left:756.8px;top:376.3px" width="5" height="4" viewBox="0 0 5 4"><path d="M.7 3.3L2.3 1.2L3.9 3.3" fill="none" stroke="#333" stroke-width="1.3"/></svg>
<svg class="r" style="left:0;top:0" width="768" height="512"><path d="M622.8 476.80H762.8" stroke="#dedede" stroke-width="1"/><path d="M622.8 460.62H762.8" stroke="#dedede" stroke-width="1"/><path d="M622.8 444.44H762.8" stroke="#dedede" stroke-width="1"/><path d="M622.8 428.26H762.8" stroke="#dedede" stroke-width="1"/><path d="M622.8 412.08H762.8" stroke="#dedede" stroke-width="1"/><path d="M622.8 395.90H762.8" stroke="#dedede" stroke-width="1"/><path d="M626.00 476.8V479.2" stroke="#dedede" stroke-width="1"/><path d="M635.50 476.8V479.2" stroke="#dedede" stroke-width="1"/><path d="M644.60 476.8V479.2" stroke="#dedede" stroke-width="1"/><path d="M653.70 476.8V479.2" stroke="#dedede" stroke-width="1"/><path d="M662.80 476.8V479.2" stroke="#dedede" stroke-width="1"/><path d="M671.90 476.8V479.2" stroke="#dedede" stroke-width="1"/><path d="M681.00 476.8V479.2" stroke="#dedede" stroke-width="1"/><path d="M690.10 476.8V479.2" stroke="#dedede" stroke-width="1"/><path d="M699.20 476.8V479.2" stroke="#dedede" stroke-width="1"/><path d="M708.30 476.8V479.2" stroke="#dedede" stroke-width="1"/><path d="M717.40 476.8V479.2" stroke="#dedede" stroke-width="1"/><path d="M726.50 476.8V479.2" stroke="#dedede" stroke-width="1"/><path d="M735.60 476.8V479.2" stroke="#dedede" stroke-width="1"/><path d="M744.70 476.8V479.2" stroke="#dedede" stroke-width="1"/><path d="M753.80 476.8V479.2" stroke="#dedede" stroke-width="1"/><path d="M626 395.9V479" stroke="#dedede" stroke-width="1"/></svg>
<div class="t" style="left:619.08px;top:472.60px;font-size:8.5px;color:#444;transform:scaleX(0.6600);">0</div>
<div class="t" style="left:615.96px;top:456.42px;font-size:8.5px;color:#444;transform:scaleX(0.6600);">50</div>
<div class="t" style="left:612.84px;top:440.24px;font-size:8.5px;color:#444;transform:scaleX(0.6600);">100</div>
<div class="t" style="left:612.84px;top:424.06px;font-size:8.5px;color:#444;transform:scaleX(0.6600);">150</div>
<div class="t" style="left:612.84px;top:407.88px;font-size:8.5px;color:#444;transform:scaleX(0.6600);">200</div>
<div class="t" style="left:612.84px;top:391.70px;font-size:8.5px;color:#444;transform:scaleX(0.6600);">250</div>
<svg class="r" style="left:0;top:0" width="768" height="512"><path d="M717.40 476.5L753.80 476.5" stroke="#d9534f" stroke-width="1"/><path d="M652.70 476.5L654.70 476.5" stroke="#d9534f" stroke-width="1"/><polyline points="635.50,437.97 644.60,445.41 653.70,476.80 662.80,436.03 671.90,451.24 681.00,432.47 690.10,439.91 699.20,414.67 708.30,446.06 717.40,474.53 726.50,473.56 735.60,473.56 744.70,475.18 753.80,475.18" fill="none" stroke="#4a90d9" stroke-width="1.2" stroke-linejoin="round"/><polyline points="635.50,428.26 644.60,440.88 653.70,476.80 662.80,431.50 671.90,443.79 681.00,424.38 690.10,429.55 699.20,403.67 708.30,437.97 717.40,473.56 726.50,466.77 735.60,466.12 744.70,465.80 753.80,468.71" fill="none" stroke="#6b9a3c" stroke-width="1.2" stroke-linejoin="round"/></svg>
<div class="t" style="left:630.20px;top:480.50px;font-size:8.5px;color:#444;transform:scaleX(0.6800);">C18</div>
<div class="t" style="left:639.30px;top:493.60px;font-size:8.5px;color:#444;transform:scaleX(0.6800);">C20</div>
<div class="t" style="left:648.40px;top:480.50px;font-size:8.5px;color:#444;transform:scaleX(0.6800);">C34</div>
<div class="t" style="left:659.11px;top:493.60px;font-size:8.5px;color:#444;transform:scaleX(0.6800);">C4</div>
<div class="t" style="left:668.21px;top:480.50px;font-size:8.5px;color:#444;transform:scaleX(0.6800);">C6</div>
<div class="t" style="left:677.31px;top:493.60px;font-size:8.5px;color:#444;transform:scaleX(0.6800);">R1</div>
<div class="t" style="left:684.80px;top:480.50px;font-size:8.5px;color:#444;transform:scaleX(0.6800);">R13</div>
<div class="t" style="left:693.90px;top:493.60px;font-size:8.5px;color:#444;transform:scaleX(0.6800);">R17</div>
<div class="t" style="left:703.00px;top:480.50px;font-size:8.5px;color:#444;transform:scaleX(0.6800);">R20</div>
<div class="t" style="left:712.10px;top:493.60px;font-size:8.5px;color:#444;transform:scaleX(0.6800);">R21</div>
<div class="t" style="left:721.36px;top:480.50px;font-size:8.5px;color:#444;transform:scaleX(0.6800);">S01</div>
<div class="t" style="left:730.62px;top:493.60px;font-size:8.5px;color:#444;transform:scaleX(0.6800);">T01</div>
<div class="t" style="left:739.40px;top:480.50px;font-size:8.5px;color:#444;transform:scaleX(0.6800);">U01</div>
<div class="t" style="left:747.86px;top:493.60px;font-size:8.5px;color:#444;transform:scaleX(0.6800);">W10</div>
<div class="t" style="left:746.39px;top:503.80px;font-size:8.5px;color:#444;transform:scaleX(0.6600);">Cages</div>
<div class="t" style="left:603.3px;top:418.1px;font-size:8px;color:#444;transform:translate(-50%,-50%) rotate(-90deg) scaleX(0.85);transform-origin:50% 50%">Poids Moyen</div>
</body></html>
